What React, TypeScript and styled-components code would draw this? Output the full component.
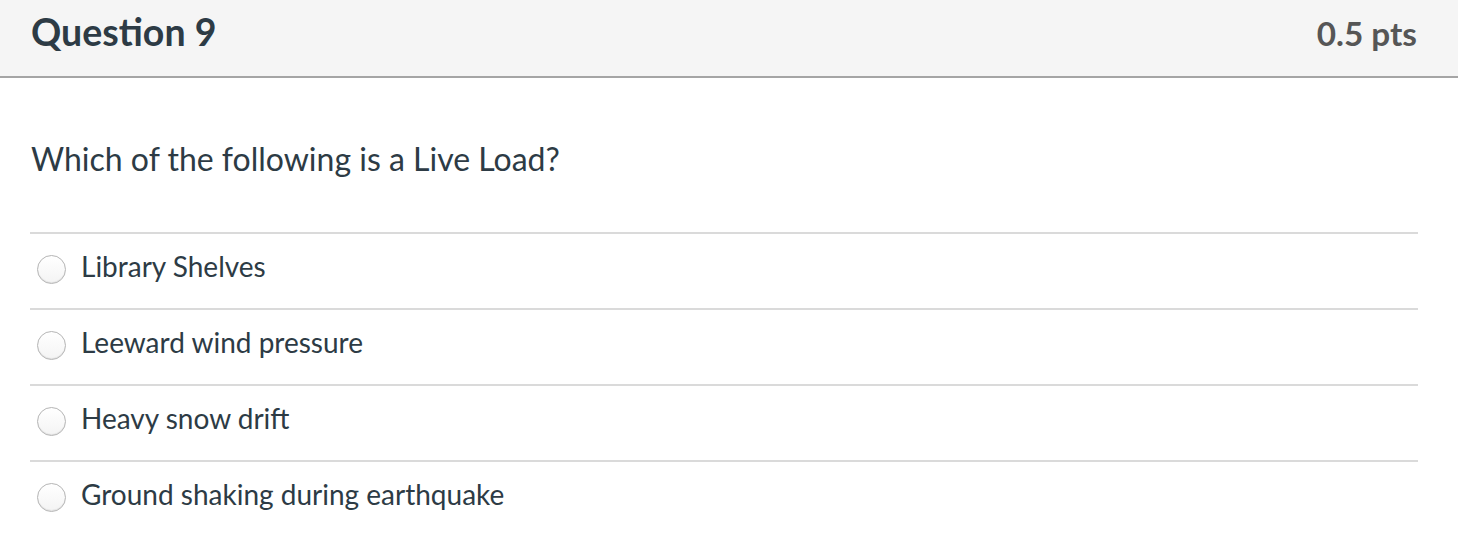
import React from 'react';
import styled, { createGlobalStyle } from 'styled-components';

const ANSWERS = [
  'Library Shelves',
  'Leeward wind pressure',
  'Heavy snow drift',
  'Ground shaking during earthquake',
];

const GlobalStyle = createGlobalStyle`
  body {
    margin: 0;
    background: #ffffff;
    font-family: Lato, "Open Sans", sans-serif;
    color: #2d3b45;
  }
`;

const App = () => {
  return (
    <>
      <GlobalStyle />
      <QuestionWrapper>
        <Header>
          <Title>Question 9</Title>
          <Points>0.5 pts</Points>
        </Header>
        <Body>
          <QuestionText>Which of the following is a Live Load?</QuestionText>
          <AnswerList>
            {ANSWERS.map((answer) => (
              <AnswerRow key={answer}>
                <Radio type="radio" name="q9" />
                <AnswerLabel>{answer}</AnswerLabel>
              </AnswerRow>
            ))}
          </AnswerList>
        </Body>
      </QuestionWrapper>
    </>
  );
};

const QuestionWrapper = styled.div`
  width: 1458px;
  height: 540px;
  overflow: hidden;
`;

const Header = styled.div`
  height: 76px;
  display: flex;
  align-items: center;
  justify-content: space-between;
  padding: 0 41px 0 31px;
  background-color: #f5f5f5;
  border-bottom: 2px solid #a5a5a5;
  box-sizing: content-box;
`;

const Title = styled.h2`
  margin: 0 0 13px;
  font-size: 37.5px;
  font-weight: 700;
  color: #2d3b45;
`;

const Points = styled.div`
  margin-bottom: 11px;
  font-size: 33.3px;
  font-weight: 700;
  color: #565656;
`;

const Body = styled.div`
  padding: 0 40px 0 30px;
`;

const QuestionText = styled.p`
  margin: 0;
  padding: 61px 0 0 1px;
  height: 93px;
  font-size: 32px;
  line-height: 40px;
`;

const AnswerList = styled.div`
  display: flex;
  flex-direction: column;
`;

const AnswerRow = styled.label`
  display: flex;
  align-items: center;
  height: 70px;
  padding: 0 0 4px 7px;
  border-top: 2px solid #dadada;
`;

const Radio = styled.input`
  appearance: none;
  margin: 0;
  width: 29px;
  height: 29px;
  border-radius: 50%;
  border: 1.5px solid #b5b5b5;
  background: linear-gradient(#ffffff, #f4f4f4);
  box-shadow: inset 0 -1px 1px rgba(0, 0, 0, 0.08);
  box-sizing: border-box;
  flex-shrink: 0;
`;

const AnswerLabel = styled.span`
  margin: 0 0 6px 15px;
  font-size: 28px;
  color: #2d3b45;
`;

export default App;
